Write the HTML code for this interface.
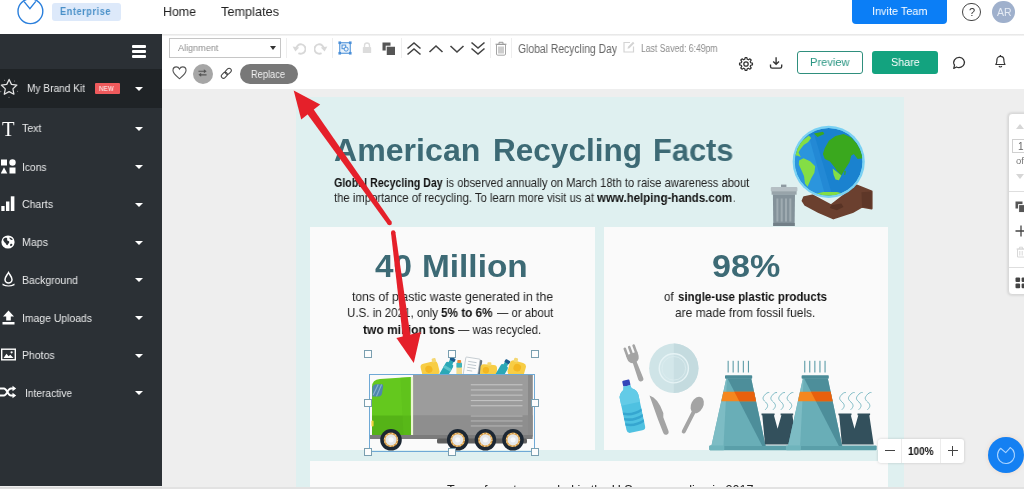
<!DOCTYPE html>
<html lang="en">
<head>
<meta charset="utf-8">
<title>Global Recycling Day - Editor</title>
<style>
*{box-sizing:border-box;margin:0;padding:0}
html,body{width:1024px;height:489px;overflow:hidden;background:#eeeeee;font-family:"Liberation Sans",sans-serif;}
#app{position:relative;width:1024px;height:489px;overflow:hidden;background:#eeeeee}
.abs{position:absolute}
.t{position:absolute;white-space:nowrap;transform-origin:0 50%;line-height:1;will-change:transform}
/* top bar */
#topbar{position:absolute;left:0;top:0;width:1024px;height:34px;background:#fff;}
#topshadow{position:absolute;left:162px;top:34px;width:862px;height:2px;background:linear-gradient(#e4e4e4,#f6f6f6)}
/* sidebar */
#sidebar{position:absolute;left:0;top:34px;width:162px;height:452px;background:#2b3035}
#brandrow{position:absolute;left:0;top:35.2px;width:162px;height:39px;background:#1f2326}
.sb{color:#e9eaeb;font-size:11px}
.caret{position:absolute;left:134.6px;width:0;height:0;margin-top:.8px;border-left:4.7px solid transparent;border-right:4.7px solid transparent;border-top:4.8px solid #fff}
/* toolbar */
#toolbar{position:absolute;left:162px;top:34px;width:862px;height:55px;background:#fff}
.sep{position:absolute;top:38px;width:1px;height:20px;background:#eeeeee}
/* page */
#page{position:absolute;left:296px;top:97px;width:608px;height:392px;background:#dff0f0}
.card{position:absolute;background:#fafafa}
.hd{color:#3d6a75;font-weight:bold}
.bd{color:#222;font-size:13px}
.bd b{color:#111}
.handle{position:absolute;width:8px;height:8px;background:#fdfdfd;border:1px solid #7a9fb0}
</style>
</head>
<body>
<div id="app">

<!-- ===== CANVAS PAGE ===== -->
<div id="page"></div>
<div class="card" style="left:310px;top:227px;width:285px;height:223px"></div>
<div class="card" style="left:604px;top:227px;width:284px;height:223px"></div>
<div class="card" style="left:310px;top:461px;width:578px;height:30px"></div>

<!--ILLUS-START-->
<svg class="abs" style="left:0;top:0" width="1024" height="489" viewBox="0 0 1024 489">
<!-- globe -->
<path d="M804.1 197.2 L812.5 195.4 L831.1 205.3 L856.6 185.5 L871.6 191.4 L871.6 208.5 L862.0 206.7 L852.5 212.1 L833.4 218.4 L818.8 212.1 L805.3 204.9 L802.6 200.8 Z" fill="#6b402f" stroke="#6b402f" stroke-width="2" stroke-linejoin="round"/>
<path d="M831.1 205.3 L841.3 203.5 L843.5 206.9 L836.8 210.3 L830.0 208.0 Z" fill="#583325"/>
<path d="M861.5 192.3 L871.6 191.4 L871.6 208.5 L862.0 206.7 Z" fill="#5e3728"/>
<circle cx="828.7" cy="161.8" r="36.1" fill="#7ad1f3"/>
<clipPath id="gc"><circle cx="828.7" cy="161.8" r="33.8"/></clipPath>
<g clip-path="url(#gc)">
<circle cx="828.7" cy="161.8" r="33.8" fill="#1a82cf"/>
<path d="M788.0 141.6 L807.6 130.2 L833.0 198.9 L802.7 198.9 L788.0 174.4 Z" fill="#2b95dd"/>
<path d="M808.9 136.4 L814.2 134.3 L831.9 194.0 L824.8 194.0 Z" fill="#2389d5"/>
<path d="M794.5 149.5 L797.5 144.9 L803.1 140.0 L808.9 135.7 L811.2 138.0 L808.0 142.3 L803.7 144.9 L800.4 149.2 L798.5 152.4 L800.8 157.0 L797.8 155.7 L795.2 155.4 Z" fill="#84de45"/>
<path d="M813.9 133.5 L823.0 131.8 L824.3 134.1 L817.5 137.1 Z" fill="#3aa81e"/>
<path d="M799.1 160.6 L803.5 158.3 L810.1 161.3 L815.2 166.2 L814.4 172.7 L811.1 178.6 L807.6 186.8 L805.0 183.5 L804.0 176.0 L801.1 169.5 L798.8 164.6 Z" fill="#84de45"/>
<path d="M822.9 154.1 L824.7 148.2 L828.9 140.8 L835.5 135.9 L843.6 134.1 L851.2 137.4 L857.1 143.9 L861.3 152.1 L863.6 158.3 L857.7 159.0 L853.8 154.1 L851.2 155.7 L849.5 162.3 L845.3 168.8 L841.4 175.4 L837.1 171.1 L833.8 166.2 L829.7 161.3 L824.8 159.0 Z" fill="#3aa81e"/>
<path d="M832.7 168.5 L841.4 175.4 L838.9 180.3 L835.5 179.6 L833.5 174.4 Z" fill="#84de45"/>
<path d="M844.3 171.1 L845.8 170.8 L845.4 174.7 L844.3 174.9 Z" fill="#3aa81e"/>
<path d="M814.2 194.3 L823.2 192.0 L837.1 192.0 L845.3 194.3 L837.1 198.9 L820.7 198.9 Z" fill="#84de45"/>
</g>
<rect x="781" y="184.6" width="5.4" height="3" fill="#8e9aa1"/>
<rect x="770.8" y="187" width="26.6" height="4.4" rx="1" fill="#b5bfc4"/>
<rect x="771.6" y="191.2" width="25" height="3.5" fill="#98a4aa"/>
<path d="M772.9 194.6 H795 L794.6 226 H773.3 Z" fill="#84929a"/>
<rect x="776.4" y="198.5" width="2" height="23" fill="#9fabb1"/>
<rect x="780.7" y="198.5" width="2" height="23" fill="#9fabb1"/>
<rect x="785.0" y="198.5" width="2" height="23" fill="#9fabb1"/>
<rect x="789.3" y="198.5" width="2" height="23" fill="#9fabb1"/>
<rect x="773.2" y="222.9" width="21.5" height="3.1" fill="#727f87"/>
<!-- truck -->
<g transform="rotate(-14 430 368)"><rect x="421" y="362.2" width="17.5" height="14" rx="3.5" fill="#f7cd45"/><rect x="433.6" y="359.4" width="4" height="4" rx="1" fill="#f4d773"/><circle cx="428.6" cy="369" r="3.6" fill="#f3b722"/></g>
<g transform="rotate(30 448 367)"><rect x="444" y="362.5" width="8.4" height="17" rx="2.2" fill="#2ba8b6"/><rect x="446" y="358.8" width="4.4" height="5" fill="#2ba8b6"/><rect x="445.4" y="356.4" width="5.6" height="3.4" rx="1" fill="#1c5e90"/><rect x="444" y="367" width="8.4" height="3" fill="#5cc4cc"/></g>
<rect x="456.4" y="362.6" width="5.6" height="5.4" rx="1" fill="#3fb3b8"/><rect x="456.4" y="367.6" width="5.6" height="7" fill="#f1dc8c"/><rect x="457.3" y="360" width="3.8" height="3" rx=".8" fill="#ea8b3a"/>
<g transform="rotate(9 472 366)"><rect x="465.8" y="358.6" width="15.6" height="19" rx="1.2" fill="#62727d"/><rect x="464.6" y="358" width="14.4" height="19" rx=".8" fill="#fcfcfc" stroke="#a9b4bb" stroke-width=".6"/><path d="M467.5 362 H476 M467.5 365 H476 M467.5 368 H476 M467.5 371 H473" stroke="#b4bec5" stroke-width=".8"/></g>
<g transform="rotate(4 489 369)"><rect x="480.4" y="364.6" width="16.6" height="12" rx="3.5" fill="#f7cd45"/><rect x="487" y="362.2" width="4" height="3.4" rx="1" fill="#f4d773"/><circle cx="486" cy="370.5" r="3.2" fill="#f3b722"/></g>
<g transform="rotate(30 503 368)"><rect x="499.6" y="364.6" width="8" height="14" rx="2.2" fill="#2ba8b6"/><rect x="501.5" y="361" width="4.2" height="4.6" fill="#2ba8b6"/><rect x="500.9" y="358.6" width="5.4" height="3.4" rx="1" fill="#1c5e90"/></g>
<g transform="rotate(16 517 367)"><rect x="509" y="361.4" width="16.6" height="15" rx="3.8" fill="#f7cd45"/><rect x="512" y="358.6" width="4" height="4" rx="1" fill="#f4d773"/><circle cx="517.4" cy="367.6" r="3.8" fill="#f3b722"/></g>
<rect x="413" y="374.3" width="119.6" height="62.3" fill="#9c9c9c"/>
<rect x="413" y="415.3" width="119.6" height="21.3" fill="#8e8e8e"/>
<path d="M528 374.3 H532.6 V434 Q532.6 436.6 529 436.6 H528 Z" fill="#8a8a8a"/>
<rect x="470.8" y="384.2" width="51.7" height="1.1" fill="#c2c2c2"/>
<rect x="470.8" y="389.4" width="51.7" height="1.1" fill="#c2c2c2"/>
<rect x="470.8" y="394.6" width="51.7" height="1.1" fill="#c2c2c2"/>
<rect x="470.8" y="400.0" width="51.7" height="1.1" fill="#c2c2c2"/>
<rect x="470.8" y="405.2" width="51.7" height="1.1" fill="#c2c2c2"/>
<rect x="470.8" y="415.5" width="51.7" height="1.1" fill="#b3b3b3"/>
<rect x="470.8" y="420.4" width="51.7" height="1.1" fill="#b3b3b3"/>
<rect x="470.8" y="425.4" width="51.7" height="1.1" fill="#b3b3b3"/>
<rect x="410.8" y="377" width="2.3" height="58.5" fill="#e9f6cf"/>
<path d="M372 387 Q372 379.3 380 378.9 L410.8 377 V435.3 H372 Z" fill="#64c81e"/>
<path d="M372 415.4 H410.8 V435.3 H372 Z" fill="#55b317"/>
<path d="M400.5 377.7 L410.8 377 V435.3 H403.5 Z" fill="#5cbd1a" opacity=".5"/>
<path d="M372.3 388 Q373 384.3 376.6 384.3 H381.8 Q383.5 384.3 383.2 386.2 L382 393.6 Q381.4 396.5 378.4 396.5 H372.3 Z" fill="#4f86ad"/>
<path d="M376.5 396.3 L381.6 384.5 M373.2 395 L378.2 384.5" stroke="#86b4cf" stroke-width="1.1"/>
<rect x="371.4" y="420.5" width="2.2" height="6" rx="1" fill="#f2d33c"/>
<rect x="369.6" y="435" width="163" height="4" fill="#7b7b7b"/>
<rect x="437" y="438.6" width="90" height="4.8" rx="1.5" fill="#5f5f5f"/>
<circle cx="391.0" cy="439.8" r="10.8" fill="#1c2733"/>
<circle cx="391.0" cy="439.8" r="7.3" fill="#d79b45"/>
<circle cx="391.0" cy="439.8" r="5.6" fill="#e4e7ea"/>
<circle cx="391.0" cy="439.8" r="6.4" fill="none" stroke="#f4d9a0" stroke-width="1.3" stroke-dasharray="1.2 2.15"/>
<circle cx="391.0" cy="439.8" r="2.6" fill="#f7f8f9"/>
<circle cx="457.7" cy="439.8" r="10.8" fill="#1c2733"/>
<circle cx="457.7" cy="439.8" r="7.3" fill="#d79b45"/>
<circle cx="457.7" cy="439.8" r="5.6" fill="#e4e7ea"/>
<circle cx="457.7" cy="439.8" r="6.4" fill="none" stroke="#f4d9a0" stroke-width="1.3" stroke-dasharray="1.2 2.15"/>
<circle cx="457.7" cy="439.8" r="2.6" fill="#f7f8f9"/>
<circle cx="485.4" cy="439.8" r="10.8" fill="#1c2733"/>
<circle cx="485.4" cy="439.8" r="7.3" fill="#d79b45"/>
<circle cx="485.4" cy="439.8" r="5.6" fill="#e4e7ea"/>
<circle cx="485.4" cy="439.8" r="6.4" fill="none" stroke="#f4d9a0" stroke-width="1.3" stroke-dasharray="1.2 2.15"/>
<circle cx="485.4" cy="439.8" r="2.6" fill="#f7f8f9"/>
<circle cx="513.0" cy="439.8" r="10.8" fill="#1c2733"/>
<circle cx="513.0" cy="439.8" r="7.3" fill="#d79b45"/>
<circle cx="513.0" cy="439.8" r="5.6" fill="#e4e7ea"/>
<circle cx="513.0" cy="439.8" r="6.4" fill="none" stroke="#f4d9a0" stroke-width="1.3" stroke-dasharray="1.2 2.15"/>
<circle cx="513.0" cy="439.8" r="2.6" fill="#f7f8f9"/>
<!-- factory -->
<rect x="709.3" y="445.5" width="167.4" height="4.8" rx="1" fill="#5a9fa9"/>
<rect x="727.6" y="360.8" width="1.1" height="11.7" fill="#5c9ca7"/>
<rect x="732.6" y="360.8" width="1.1" height="11.7" fill="#5c9ca7"/>
<rect x="737.7" y="360.8" width="1.1" height="11.7" fill="#5c9ca7"/>
<rect x="742.8" y="360.8" width="1.1" height="11.7" fill="#5c9ca7"/>
<rect x="747.9" y="360.8" width="1.1" height="11.7" fill="#5c9ca7"/>
<path d="M726.3 378.6 H751.2 L765.6 446.0 H711.4 Z" fill="#69aeb7"/>
<path d="M726.3 378.6 H727.0 L723.5 446.0 H711.4 Z" fill="#7dbcc4"/>
<path d="M727.6 378.6 H751.2 L765.6 446.0 H762.3 Z" fill="#4d8e9a"/>
<path d="M723.4 391.7 H754.0 L756.0 401.3 H721.3 Z" fill="#f5871f"/>
<path d="M734.3 391.7 H754.0 L756.0 401.3 H739.3 Z" fill="#e8600c"/>
<rect x="725.0" y="375.2" width="27.2" height="3.6" rx=".8" fill="#4b8b97"/>
<path d="M761.5 413.6 L774.6 413.6 L774.6 415.2 L773.9 415.2 L777.6 428.8 L781.4 415.2 L780.6 415.2 L780.6 413.6 L793.2 413.6 L793.2 415.2 L792.4 415.2 L796.8 444.6 L765.0 444.6 L762.3 415.2 L761.5 415.2 Z" fill="#33505c"/>
<path d="M765.5 409.5 C768.7 406.5 768.1 404.5 765.5 402 C762.7 399.5 762.3 398 764.3 395.5 C765.7 393.5 768.1 392 768.9 392.4" fill="none" stroke="#7dbac4" stroke-width="1" stroke-linecap="round"/>
<path d="M773.3 409.5 C776.5 406.5 775.9 404.5 773.3 402 C770.5 399.5 770.1 398 772.1 395.5 C773.5 393.5 775.9 392 776.7 392.4" fill="none" stroke="#7dbac4" stroke-width="1" stroke-linecap="round"/>
<path d="M781.2 409.5 C784.4 406.5 783.8 404.5 781.2 402 C778.4 399.5 778.0 398 780.0 395.5 C781.4 393.5 783.8 392 784.6 392.4" fill="none" stroke="#7dbac4" stroke-width="1" stroke-linecap="round"/>
<path d="M789.6 409.5 C792.8 406.5 792.2 404.5 789.6 402 C786.8 399.5 786.4 398 788.4 395.5 C789.8 393.5 792.2 392 793.0 392.4" fill="none" stroke="#7dbac4" stroke-width="1" stroke-linecap="round"/>
<rect x="804.2" y="360.8" width="1.1" height="11.7" fill="#5c9ca7"/>
<rect x="809.2" y="360.8" width="1.1" height="11.7" fill="#5c9ca7"/>
<rect x="814.3" y="360.8" width="1.1" height="11.7" fill="#5c9ca7"/>
<rect x="819.4" y="360.8" width="1.1" height="11.7" fill="#5c9ca7"/>
<rect x="824.5" y="360.8" width="1.1" height="11.7" fill="#5c9ca7"/>
<path d="M802.9 378.6 H827.8 L842.2 446.0 H788.0 Z" fill="#69aeb7"/>
<path d="M802.9 378.6 H803.6 L800.1 446.0 H788.0 Z" fill="#7dbcc4"/>
<path d="M804.2 378.6 H827.8 L842.2 446.0 H838.9 Z" fill="#4d8e9a"/>
<path d="M800.0 391.7 H830.6 L832.6 401.3 H797.9 Z" fill="#f5871f"/>
<path d="M810.9 391.7 H830.6 L832.6 401.3 H815.9 Z" fill="#e8600c"/>
<rect x="801.6" y="375.2" width="27.2" height="3.6" rx=".8" fill="#4b8b97"/>
<path d="M838.4 413.6 L851.5 413.6 L851.5 415.2 L850.8 415.2 L854.5 428.8 L858.3 415.2 L857.5 415.2 L857.5 413.6 L870.1 413.6 L870.1 415.2 L869.3 415.2 L873.7 444.6 L841.9 444.6 L839.2 415.2 L838.4 415.2 Z" fill="#33505c"/>
<path d="M842.1 409.5 C845.3 406.5 844.7 404.5 842.1 402 C839.3 399.5 838.9 398 840.9 395.5 C842.3 393.5 844.7 392 845.5 392.4" fill="none" stroke="#7dbac4" stroke-width="1" stroke-linecap="round"/>
<path d="M850.9 409.5 C854.1 406.5 853.5 404.5 850.9 402 C848.1 399.5 847.7 398 849.7 395.5 C851.1 393.5 853.5 392 854.3 392.4" fill="none" stroke="#7dbac4" stroke-width="1" stroke-linecap="round"/>
<path d="M858.9 409.5 C862.1 406.5 861.5 404.5 858.9 402 C856.1 399.5 855.7 398 857.7 395.5 C859.1 393.5 861.5 392 862.3 392.4" fill="none" stroke="#7dbac4" stroke-width="1" stroke-linecap="round"/>
<path d="M867.7 409.5 C870.9 406.5 870.3 404.5 867.7 402 C864.9 399.5 864.5 398 866.5 395.5 C867.9 393.5 870.3 392 871.1 392.4" fill="none" stroke="#7dbac4" stroke-width="1" stroke-linecap="round"/>
<rect x="709.3" y="445.5" width="15" height="4.8" rx="1" fill="#6fb4bc"/>
<rect x="785.9" y="445.5" width="15" height="4.8" rx="1" fill="#6fb4bc"/>
<!-- utensils -->
<g transform="translate(628.8,346) rotate(-20)" fill="#a4a4a4"><rect x="-6" y="0" width="2.6" height="10" rx="1.2"/><rect x="-1.3" y="0" width="2.6" height="10" rx="1.2"/><rect x="3.4" y="0" width="2.6" height="10" rx="1.2"/><path d="M-6 8 H6 V11 Q6 16 2 17.5 L2.6 35 Q2.6 37.6 0 37.6 Q-2.6 37.6 -2.6 35 L-2 17.5 Q-6 16 -6 11 Z"/></g>
<circle cx="673.8" cy="368.3" r="24.7" fill="#cfe4e7"/>
<path d="M673.8 343.6 A24.7 24.7 0 0 1 673.8 393 Z" fill="#c4dbdf"/>
<circle cx="673.8" cy="368.3" r="14.6" fill="#d3e7ea"/>
<path d="M673.8 353.7 A14.6 14.6 0 0 1 673.8 382.9 Z" fill="#c9dfe3"/>
<circle cx="673.8" cy="368.3" r="14.6" fill="none" stroke="#e6f3f5" stroke-width="1.4"/>
<circle cx="673.8" cy="368.3" r="11.8" fill="none" stroke="#dcecef" stroke-width=".8"/>
<g transform="translate(625.6,380.2) rotate(-12)"><rect x="-3.6" y="0" width="7.4" height="6" rx="1" fill="#3345b9"/><path d="M-3.4 6 H3.6 L4.2 9 Q9.5 12 9.5 17 V49 Q9.5 52.5 6 52.5 H-6 Q-9.5 52.5 -9.5 49 V17 Q-9.5 12 -4.2 9 Z" fill="#4fc1e1"/><path d="M-3.4 6 H3.6 L4.2 9 Q9.5 12 9.5 17 V24 H-9.5 V17 Q-9.5 12 -4.2 9 Z" fill="#63cbe7"/><path d="M-9.5 31 Q0 35 9.5 31 V33.6 Q0 37.6 -9.5 33.6 Z M-9.5 36.5 Q0 40.5 9.5 36.5 V39.1 Q0 43.1 -9.5 39.1 Z M-9.5 42 Q0 46 9.5 42 V44.6 Q0 48.6 -9.5 44.6 Z" fill="#36a6d0"/></g>
<g transform="translate(651,395) rotate(-19)" fill="#a4a4a4"><path d="M-1.6 0 Q5.6 5 5.8 21 L4.4 25 L4.8 39.5 Q4.8 42.6 2 42.6 Q-0.8 42.6 -0.8 39.5 L-1.4 25 Z"/></g>
<g transform="translate(697.2,405) rotate(27)" fill="#a4a4a4"><ellipse cx="0" cy="0" rx="6" ry="8.8"/><path d="M-2 6 H2 L2 29.5 Q2 31.8 0 31.8 Q-2 31.8 -2 29.5 Z"/></g>
</svg>
<!--ILLUS-END-->
<!--PAGETEXT-START-->
<span class="t hd" id="h1a" style="left:334.0px;top:135.0px;font-size:31.4px;transform:scaleX(1.0232)">American</span>
<span class="t hd" id="h1b" style="left:493.0px;top:135.0px;font-size:31.4px;transform:scaleX(1.0047)">Recycling</span>
<span class="t hd" id="h1c" style="left:652.5px;top:135.0px;font-size:31.4px;transform:scaleX(0.9815)">Facts</span>
<span class="t bd" id="p1a" style="left:333.8px;top:176.8px;font-size:12.4px;transform:scaleX(0.8579)"><b>Global Recycling Day</b></span>
<span class="t bd" id="p1b" style="left:446.2px;top:176.8px;font-size:12.4px;transform:scaleX(0.8987)">is observed annually on March 18th to raise awareness about</span>
<span class="t bd" id="p2a" style="left:334.0px;top:191.8px;font-size:12.4px;transform:scaleX(0.9104)">the importance of recycling. To learn more visit us at</span>
<span class="t bd" id="p2b" style="left:597.0px;top:191.8px;font-size:12.4px;transform:scaleX(0.9279)"><b>www.helping-hands.com</b></span>
<span class="t bd" id="p2c" style="left:732.6px;top:191.8px;font-size:12.4px;transform:scaleX(0.6950)">.</span>
<span class="t hd" id="h2a" style="left:374.6px;top:251.4px;font-size:31.4px;transform:scaleX(1.0595)">40</span>
<span class="t hd" id="h2b" style="left:422.3px;top:251.4px;font-size:31.4px;transform:scaleX(1.0635)">Million</span>
<span class="t bd" id="c1" style="left:351.5px;top:289.9px;font-size:13.0px;transform:scaleX(0.9364)">tons of plastic waste generated in the</span>
<span class="t bd" id="c2a" style="left:346.7px;top:306.3px;font-size:13.0px;transform:scaleX(0.8877)">U.S. in 2021, only</span>
<span class="t bd" id="c2b" style="left:441.2px;top:306.3px;font-size:13.0px;transform:scaleX(0.9023)"><b>5% to 6%</b></span>
<span class="t bd" id="c2c" style="left:497.4px;top:306.3px;font-size:13.0px;transform:scaleX(0.8752)">— or about</span>
<span class="t bd" id="c3a" style="left:362.5px;top:322.7px;font-size:13.0px;transform:scaleX(0.9248)"><b>two million tons</b></span>
<span class="t bd" id="c3b" style="left:457.6px;top:322.7px;font-size:13.0px;transform:scaleX(0.8723)">— was recycled.</span>
<span class="t hd" id="h3" style="left:711.6px;top:251.3px;font-size:31.4px;transform:scaleX(1.0855)">98%</span>
<span class="t bd" id="d1a" style="left:664.0px;top:289.9px;font-size:13.0px;transform:scaleX(0.8853)">of</span>
<span class="t bd" id="d1b" style="left:677.7px;top:289.9px;font-size:13.0px;transform:scaleX(0.8852)"><b>single-use plastic products</b></span>
<span class="t bd" id="d2" style="left:674.6px;top:306.3px;font-size:13.0px;transform:scaleX(0.9209)">are made from fossil fuels.</span>
<span class="t bd" id="e1" style="left:447.0px;top:483.9px;font-size:12.4px;transform:scaleX(1.0137)">Tons of waste recycled in the U.S. vs. recycling in 2017</span>
<!--PAGETEXT-END-->

<!-- ===== TOP BAR ===== -->
<div id="topbar"></div>
<!--TOPBAR-START-->
<!-- logo -->
<svg class="abs" style="left:16px;top:0" width="30" height="26" viewBox="16 0 30 26"><circle cx="30.4" cy="11.2" r="12.4" fill="none" stroke="#2a7fdc" stroke-width="1.4"/><path d="M24.1 1.6 L29.9 8.6 L35.8 1.4" fill="none" stroke="#2a7fdc" stroke-width="1.4" stroke-linejoin="miter"/></svg>
<div class="abs" style="left:51.5px;top:3px;width:69.5px;height:17.5px;background:#dde9fa;border-radius:3px"></div>
<span class="t" id="tb0" style="left:60px;top:7px;font-size:10px;font-weight:bold;color:#4a90c8;letter-spacing:.6px;transform:scaleX(0.9194)">Enterprise</span>
<span class="t" id="tb1" style="left:163px;top:4.5px;font-size:13px;color:#222;transform:scaleX(0.9514)">Home</span>
<span class="t" id="tb2" style="left:221px;top:4.5px;font-size:13px;color:#222;transform:scaleX(0.9789)">Templates</span>
<div class="abs" style="left:852px;top:-4px;width:95px;height:28px;background:#0b7ef6;border-radius:4px"></div>
<span class="t" id="tb3" style="left:872px;top:6px;font-size:11.5px;color:#fff;transform:scaleX(0.9469)">Invite Team</span>
<div class="abs" style="left:962px;top:2.5px;width:18.5px;height:18.5px;border:1px solid #444;border-radius:50%"></div>
<span class="t" id="tb4" style="left:968.5px;top:6.5px;font-size:11px;color:#333">?</span>
<div class="abs" style="left:992px;top:0.5px;width:22.5px;height:22.5px;background:#9fb0cc;border-radius:50%"></div>
<span class="t" id="tb5" style="left:996.5px;top:6.5px;font-size:10.5px;color:#e6ecf5">AR</span>
<!--TOPBAR-END-->

<!-- ===== TOOLBAR ===== -->
<div id="toolbar"></div>
<div id="topshadow"></div>
<!--TOOLBAR-START-->
<!-- alignment select -->
<div class="abs" style="left:169px;top:38px;width:111.5px;height:19.6px;border:1px solid #c6c6c6;background:#fff"></div>
<span class="t" id="tl0" style="left:177.6px;top:43.1px;font-size:9.5px;color:#8e8e8e;transform:scaleX(0.9586)">Alignment</span>
<div class="abs" style="left:269.5px;top:45.5px;width:0;height:0;border-left:3.5px solid transparent;border-right:3.5px solid transparent;border-top:4.5px solid #333"></div>
<div class="sep" style="left:286px"></div>
<div class="sep" style="left:332px"></div>
<div class="sep" style="left:401px"></div>
<div class="sep" style="left:490px"></div>
<div class="sep" style="left:511px"></div>
<!-- undo / redo -->
<svg class="abs" style="left:292px;top:42px" width="14" height="14" viewBox="0 0 14 14"><path d="M4.1 7 A4.7 4.7 0 1 1 6.45 11.1" fill="none" stroke="#d8d8d8" stroke-width="1.9"/><path d="M0.6 4.6 L7.2 5.4 L3.4 9.6 Z" fill="#d8d8d8"/></svg>
<svg class="abs" style="left:313.5px;top:42px" width="14" height="14" viewBox="0 0 14 14"><g transform="translate(14,0) scale(-1,1)"><path d="M4.1 7 A4.7 4.7 0 1 1 6.45 11.1" fill="none" stroke="#d8d8d8" stroke-width="1.9"/><path d="M0.6 4.6 L7.2 5.4 L3.4 9.6 Z" fill="#d8d8d8"/></g></svg>
<!-- group -->
<svg class="abs" style="left:338.4px;top:41px" width="14" height="14" viewBox="0 0 16 16"><rect x="2" y="2" width="12" height="12" fill="#eaf3fb" stroke="#4a8fd8" stroke-width="1.2"/><rect x="0.5" y="0.5" width="3" height="3" fill="#4a8fd8"/><rect x="12.5" y="0.5" width="3" height="3" fill="#4a8fd8"/><rect x="0.5" y="12.5" width="3" height="3" fill="#4a8fd8"/><rect x="12.5" y="12.5" width="3" height="3" fill="#4a8fd8"/><rect x="4.6" y="4.6" width="4.2" height="4.2" fill="none" stroke="#4a8fd8" stroke-width="1.1"/><circle cx="9.3" cy="9.3" r="2.3" fill="#eaf3fb" stroke="#4a8fd8" stroke-width="1.1"/></svg>
<!-- lock -->
<svg class="abs" style="left:362.4px;top:41.6px" width="10" height="11.7" viewBox="0 0 12 14"><path d="M3 6.5 V4.2 A3 3 0 0 1 9 4.2 V6.5" fill="none" stroke="#dcdcdc" stroke-width="1.6"/><rect x="1" y="6" width="10" height="7.5" rx="1" fill="#dcdcdc"/></svg>
<!-- copy -->
<svg class="abs" style="left:382px;top:41.5px" width="14" height="14" viewBox="0 0 14 14"><rect x="0.5" y="0.5" width="8" height="8" fill="#555"/><rect x="4.2" y="4.2" width="9.3" height="9.3" fill="#555" stroke="#fff" stroke-width="1"/></svg>
<!-- chevrons -->
<svg class="abs" style="left:406px;top:41px" width="16" height="16" viewBox="0 0 16 16"><path d="M1.5 7.5 L8 2 L14.5 7.5 M1.5 13.5 L8 8 L14.5 13.5" fill="none" stroke="#444" stroke-width="1.6"/></svg>
<svg class="abs" style="left:428px;top:41px" width="16" height="16" viewBox="0 0 16 16"><path d="M1.5 11 L8 5 L14.5 11" fill="none" stroke="#444" stroke-width="1.6"/></svg>
<svg class="abs" style="left:449px;top:41px" width="16" height="16" viewBox="0 0 16 16"><path d="M1.5 5 L8 11 L14.5 5" fill="none" stroke="#444" stroke-width="1.6"/></svg>
<svg class="abs" style="left:470px;top:40px" width="16" height="16" viewBox="0 0 16 16"><path d="M1.5 2.5 L8 8 L14.5 2.5 M1.5 8.5 L8 14 L14.5 8.5" fill="none" stroke="#444" stroke-width="1.6"/></svg>
<!-- trash -->
<svg class="abs" style="left:495px;top:41px" width="12" height="15" viewBox="0 0 12 15"><path d="M1.5 3.5 H10.5 V13 A1.2 1.2 0 0 1 9.3 14.2 H2.7 A1.2 1.2 0 0 1 1.5 13 Z" fill="#fff" stroke="#a5a5a5" stroke-width="1"/><path d="M0.5 3.2 H11.5 M4 3 V1.3 H8 V3 M4 5.5 V12.5 M6 5.5 V12.5 M8 5.5 V12.5" fill="none" stroke="#9a9a9a" stroke-width="1"/></svg>
<!-- title -->
<span class="t" id="tl1" style="left:518px;top:42.5px;font-size:12px;color:#666;transform:scaleX(0.8630)">Global Recycling Day</span>
<svg class="abs" style="left:623px;top:41px" width="12" height="12" viewBox="0 0 12 12"><path d="M7 1.5 H1 V11 H10.5 V5.5" fill="none" stroke="#d4d4d4" stroke-width="1.2"/><path d="M4.5 7.8 L5 5.8 L10 0.8 L11.4 2.2 L6.4 7.2 Z" fill="#d4d4d4"/></svg>
<span class="t" id="tl2" style="left:641px;top:43.5px;font-size:10px;color:#8c8c8c;transform:scaleX(0.8600)">Last Saved: 6:49pm</span>
<!-- second row -->
<svg class="abs" style="left:171.8px;top:66.4px" width="15" height="14" viewBox="0 0 16 15"><path d="M8 13.6 C4.5 10.6 1 8 1 4.8 C1 2.6 2.7 1 4.6 1 C6 1 7.3 1.8 8 3.2 C8.7 1.8 10 1 11.4 1 C13.3 1 15 2.6 15 4.8 C15 8 11.5 10.6 8 13.6 Z" fill="none" stroke="#555" stroke-width="1.2"/></svg>
<div class="abs" style="left:192.5px;top:63.5px;width:20px;height:20px;background:#a6a6a6;border-radius:50%"></div>
<svg class="abs" style="left:198px;top:69.4px" width="9" height="8.1" viewBox="0 0 10 9"><path d="M0.5 2.5 H7 M3 6.5 H9.5" stroke="#555" stroke-width="1.2" fill="none"/><path d="M6.5 0.3 L9.6 2.5 L6.5 4.7 Z M3.5 4.3 L0.4 6.5 L3.5 8.7 Z" fill="#555"/></svg>
<svg class="abs" style="left:220px;top:67.2px" width="12.6" height="12.6" viewBox="0 0 14 14"><g transform="rotate(-45 7 7)" fill="none" stroke="#444" stroke-width="1.15"><rect x="0.2" y="4.6" width="7.4" height="4.8" rx="2.4"/><rect x="6.4" y="4.6" width="7.4" height="4.8" rx="2.4"/></g></svg>
<div class="abs" style="left:240px;top:64px;width:57.5px;height:20px;background:#787878;border-radius:10px"></div>
<span class="t" id="tl3" style="left:251px;top:69px;font-size:10.5px;color:#f1f1f1;transform:scaleX(0.8824)">Replace</span>
<!-- right icons -->
<svg class="abs" style="left:738.2px;top:55.5px" width="16" height="16" viewBox="0 0 16 16"><path d="M14.44 7.13 L14.44 8.87 L12.74 9.26 L12.24 10.46 L13.17 11.94 L11.94 13.17 L10.46 12.24 L9.26 12.74 L8.87 14.44 L7.13 14.44 L6.74 12.74 L5.54 12.24 L4.06 13.17 L2.83 11.94 L3.76 10.46 L3.26 9.26 L1.56 8.87 L1.56 7.13 L3.26 6.74 L3.76 5.54 L2.83 4.06 L4.06 2.83 L5.54 3.76 L6.74 3.26 L7.13 1.56 L8.87 1.56 L9.26 3.26 L10.46 3.76 L11.94 2.83 L13.17 4.06 L12.24 5.54 L12.74 6.74 Z" fill="none" stroke="#333" stroke-width="1.25" stroke-linejoin="round"/><circle cx="8" cy="8" r="2.2" fill="none" stroke="#333" stroke-width="1.25"/></svg>
<svg class="abs" style="left:769px;top:55px" width="15" height="15" viewBox="0 0 15 15"><path d="M7.1 2.2 V9.2 M4.2 6.4 L7.1 9.3 L10 6.4" fill="none" stroke="#333" stroke-width="1.35"/><path d="M1.5 9.4 V11.5 A1.6 1.6 0 0 0 3.1 13.1 H11.1 A1.6 1.6 0 0 0 12.7 11.5 V9.4" fill="none" stroke="#333" stroke-width="1.35"/></svg>
<div class="abs" style="left:797px;top:51px;width:66px;height:23px;border:1.5px solid #2f8f7d;border-radius:3px;background:#fff"></div>
<span class="t" id="tl4" style="left:810px;top:57px;font-size:11.5px;color:#2a9683;transform:scaleX(0.9656)">Preview</span>
<div class="abs" style="left:872px;top:51px;width:66px;height:23px;border-radius:3px;background:#13a37f"></div>
<span class="t" id="tl5" style="left:890.5px;top:57px;font-size:11.5px;color:#fff;transform:scaleX(0.9369)">Share</span>
<svg class="abs" style="left:951.8px;top:55.6px" width="14.6" height="14.6" viewBox="0 0 15 15"><path d="M7.8 1.5 A5.6 5.2 0 1 1 4.6 11.3 L1.8 12.8 L2.6 9.4 A5.6 5.2 0 0 1 7.8 1.5 Z" fill="none" stroke="#333" stroke-width="1.3" stroke-linejoin="round"/></svg>
<svg class="abs" style="left:993.7px;top:54.2px" width="12.8" height="14.6" viewBox="0 0 14 16"><path d="M2 11.5 C3.2 10 3 8.5 3.2 6.5 A3.8 3.8 0 0 1 10.8 6.5 C11 8.5 10.8 10 12 11.5 Z" fill="none" stroke="#333" stroke-width="1.3" stroke-linejoin="round"/><path d="M5.5 13.2 A1.6 1.6 0 0 0 8.5 13.2 M7 2.7 V1.2" fill="none" stroke="#333" stroke-width="1.3"/></svg>
<!--TOOLBAR-END-->

<!-- ===== SIDEBAR ===== -->
<div id="sidebar"><div id="brandrow"></div></div>
<!--SIDEBAR-START-->
<!-- hamburger -->
<div class="abs" style="left:132px;top:45px;width:14px;height:2.5px;background:#fff;border-radius:1px"></div>
<div class="abs" style="left:132px;top:50px;width:14px;height:2.5px;background:#fff;border-radius:1px"></div>
<div class="abs" style="left:132px;top:55px;width:14px;height:2.5px;background:#fff;border-radius:1px"></div>

<!-- My Brand Kit -->
<svg class="abs" style="left:0;top:78px" width="19" height="20" viewBox="0 0 19 20"><path d="M9.10 1.40 L11.45 6.36 L16.90 7.07 L12.90 10.84 L13.92 16.23 L9.10 13.60 L4.28 16.23 L5.30 10.84 L1.30 7.07 L6.75 6.36 Z" fill="none" stroke="#e4e4e4" stroke-width="1.25" stroke-linejoin="round"/><circle cx="4.6" cy="2.2" r=".55" fill="#999"/><circle cx="14.6" cy="3" r=".55" fill="#999"/><circle cx="17.6" cy="13.2" r=".55" fill="#999"/><circle cx="9" cy="19.2" r=".55" fill="#999"/><circle cx=".8" cy="13.6" r=".55" fill="#999"/></svg>
<span class="t sb" id="sb0" style="left:26.5px;top:83px;font-size:10.6px;transform:scaleX(0.9565)">My Brand Kit</span>
<div class="abs" style="left:94.5px;top:83px;width:25.5px;height:11px;background:#ef5a5c;border-radius:1px"></div>
<span class="t" id="sbnew" style="left:99px;top:85px;font-size:7px;color:#fff;letter-spacing:.2px;transform:scaleX(0.8856)">NEW</span>
<div class="caret" style="top:86px"></div>

<!-- Text -->
<span class="t" style="left:2px;top:118.5px;font-family:'Liberation Serif',serif;font-size:20.5px;color:#fff">T</span>
<span class="t sb" id="sb1" style="left:22px;top:122.7px;transform:scaleX(0.9659)">Text</span>
<div class="caret" style="top:126px"></div>

<!-- Icons -->
<svg class="abs" style="left:1px;top:159px" width="15" height="15" viewBox="0 0 15 15"><rect x="0" y="0.5" width="6" height="6" fill="#fff"/><circle cx="11.5" cy="3.5" r="3.2" fill="#fff"/><path d="M3 8.3 L6.3 14.5 L-0.3 14.5 Z" fill="#fff"/><rect x="8.5" y="8.5" width="6" height="6" fill="#fff"/></svg>
<span class="t sb" id="sb2" style="left:22px;top:161.7px;transform:scaleX(0.9317)">Icons</span>
<div class="caret" style="top:164px"></div>

<!-- Charts -->
<svg class="abs" style="left:1px;top:196px" width="14" height="15" viewBox="0 0 14 15"><rect x="0.3" y="10" width="3.3" height="5" fill="#fff"/><rect x="5" y="5.5" width="3.4" height="9.5" fill="#fff"/><rect x="9.8" y="0.3" width="3.6" height="14.7" fill="#fff"/></svg>
<span class="t sb" id="sb3" style="left:22px;top:198.7px;transform:scaleX(0.9566)">Charts</span>
<div class="caret" style="top:202px"></div>

<!-- Maps -->
<svg class="abs" style="left:1px;top:235px" width="14" height="14" viewBox="0 0 14 14"><circle cx="7" cy="7" r="6.6" fill="#fff"/><path d="M2.3 4.2 C3.5 2.8 5 2.5 6 3 C6.6 4 5.8 4.8 6.3 5.6 C7 6.3 8 6 8.3 7 C8.3 8.3 7 8.6 6.8 9.8 C6.3 10.6 5.3 10 5 9 C4.7 8 3.5 7.6 3 6.6 C2.6 5.8 2 5.2 2.3 4.2 Z M8.5 2.4 C9.8 2.4 11.2 3.4 11.8 4.6 C11 5.2 10 5 9.3 4.3 C8.8 3.7 8.3 3 8.5 2.4 Z M9.5 9 C10.3 8.6 11.3 9 11.4 9.8 C11 10.8 10 11.4 9.4 11 C9 10.3 9 9.5 9.5 9 Z" fill="#2b3035"/></svg>
<span class="t sb" id="sb4" style="left:22px;top:236.7px;transform:scaleX(0.9663)">Maps</span>
<div class="caret" style="top:240px"></div>

<!-- Background -->
<svg class="abs" style="left:2px;top:271px" width="14" height="16" viewBox="0 0 14 16"><path d="M6.5 1.5 C8 4.2 10 6 10 8.6 A3.5 3.5 0 0 1 3 8.6 C3 6 5 4.2 6.5 1.5 Z" fill="none" stroke="#fff" stroke-width="1.5"/><path d="M0.5 12.5 Q6.5 16.5 12.5 12.5 L12.5 14.2 Q6.5 16.8 0.5 14.2 Z" fill="#fff"/></svg>
<span class="t sb" id="sb5" style="left:22px;top:274.7px;transform:scaleX(0.9537)">Background</span>
<div class="caret" style="top:277px"></div>

<!-- Image Uploads -->
<svg class="abs" style="left:2px;top:310px" width="13" height="15" viewBox="0 0 13 15"><path d="M6.5 0.5 L12 6.5 L8.8 6.5 L8.8 10.5 L4.2 10.5 L4.2 6.5 L1 6.5 Z" fill="#fff"/><rect x="0.5" y="12" width="12" height="2.5" fill="#fff"/></svg>
<span class="t sb" id="sb6" style="left:22px;top:312.7px;transform:scaleX(0.9459)">Image Uploads</span>
<div class="caret" style="top:315px"></div>

<!-- Photos -->
<svg class="abs" style="left:1px;top:348px" width="15" height="13" viewBox="0 0 15 13"><rect x="0.7" y="1.2" width="13.6" height="10.6" fill="none" stroke="#fff" stroke-width="1.4"/><path d="M2.5 10 L5.5 5.8 L7.6 8.3 L9.3 6.8 L12.5 10 Z" fill="#fff"/><circle cx="10.6" cy="4.3" r="1.1" fill="#fff"/></svg>
<span class="t sb" id="sb7" style="left:22px;top:349.7px;transform:scaleX(0.9518)">Photos</span>
<div class="caret" style="top:353px"></div>

<!-- Interactive -->
<svg class="abs" style="left:0px;top:385px" width="17" height="14" viewBox="0 0 17 14"><path d="M0 3.5 H4 C7 3.5 7.5 10.5 11 10.5 H13.5 M0 10.5 H4 C7 10.5 7.5 3.5 11 3.5 H13.5" fill="none" stroke="#fff" stroke-width="1.8"/><path d="M12.5 0.8 L16.2 3.5 L12.5 6.2 Z M12.5 7.8 L16.2 10.5 L12.5 13.2 Z" fill="#fff"/></svg>
<span class="t sb" id="sb8" style="left:25px;top:387.7px;transform:scaleX(0.9261)">Interactive</span>
<div class="caret" style="top:390px"></div>
<!--SIDEBAR-END-->

<!--OVERLAYS-START-->
<!-- selection -->
<div class="abs" style="left:369px;top:373.6px;width:166px;height:78px;border:1px solid #6fa9d6"></div>
<div class="handle" style="left:364px;top:350px"></div>
<div class="handle" style="left:447.5px;top:350px"></div>
<div class="handle" style="left:531px;top:350px"></div>
<div class="handle" style="left:364px;top:399.3px"></div>
<div class="handle" style="left:531px;top:399.3px"></div>
<div class="handle" style="left:364px;top:447.6px"></div>
<div class="handle" style="left:447.5px;top:447.6px"></div>
<div class="handle" style="left:531px;top:447.6px"></div>
<!-- red arrows -->
<svg class="abs" style="left:0;top:0" width="1024" height="489" viewBox="0 0 1024 489">
<path d="M391.5 221.7 L313.2 108.7 L306.8 113.3 L387.7 224.3 Z" fill="#e5202a"/><circle cx="389.6" cy="223.0" r="2.3" fill="#e5202a"/>
<path d="M293.7 90.6 L320.2 104.4 L301.2 119.4 Z" fill="#e5202a"/>
<path d="M391.0 232.8 L402.9 337.5 L410.5 336.5 L395.4 232.2 Z" fill="#e5202a"/><circle cx="393.2" cy="232.5" r="2.2" fill="#e5202a"/>
<path d="M396.4 337.9 L420.9 332 L413.8 362.9 Z" fill="#e5202a"/>
</svg>
<!-- right panel -->
<div class="abs" style="left:1008px;top:113px;width:24px;height:182px;background:#fff;border:1px solid #d9d9d9;border-radius:4px;box-shadow:0 0 3px rgba(0,0,0,.18)"></div>
<div class="abs" style="left:1016px;top:124px;width:0;height:0;border-left:4px solid transparent;border-right:4px solid transparent;border-bottom:5px solid #d6d6d6"></div>
<div class="abs" style="left:1012px;top:139px;width:16px;height:14px;border:1px solid #d0d0d0;background:#fff"></div>
<span class="t" style="left:1018px;top:141.5px;font-size:10px;color:#666">1</span>
<span class="t" style="left:1016px;top:156px;font-size:9.5px;color:#777">of</span>
<div class="abs" style="left:1016px;top:174px;width:0;height:0;border-left:4px solid transparent;border-right:4px solid transparent;border-top:5px solid #d6d6d6"></div>
<div class="abs" style="left:1009px;top:190.5px;width:15px;height:1px;background:#dedede"></div>
<svg class="abs" style="left:1015px;top:201px" width="12" height="12" viewBox="0 0 12 12"><rect x="0.5" y="0.5" width="7" height="7" fill="#555"/><rect x="3.6" y="3.6" width="8" height="8" fill="#555" stroke="#fff" stroke-width="1"/></svg>
<svg class="abs" style="left:1015px;top:225px" width="12" height="12" viewBox="0 0 12 12"><path d="M6 0.5 V11.5 M0.5 6 H11.5" stroke="#444" stroke-width="1.3"/></svg>
<svg class="abs" style="left:1016px;top:246px" width="10" height="12" viewBox="0 0 10 12"><path d="M1.5 3 H8.5 V11 H1.5 Z M0.5 3 H9.5 M3.5 3 V1.2 H6.5 V3 M3.8 5 V9.5 M6.2 5 V9.5" fill="none" stroke="#d8d8d8" stroke-width="1"/></svg>
<div class="abs" style="left:1009px;top:266.5px;width:15px;height:1px;background:#dedede"></div>
<svg class="abs" style="left:1015px;top:277px" width="12" height="12" viewBox="0 0 12 12"><rect x="0.5" y="0.5" width="4.6" height="4.6" rx="1" fill="#444"/><rect x="6.6" y="0.5" width="4.6" height="4.6" rx="1" fill="#444"/><rect x="0.5" y="6.6" width="4.6" height="4.6" rx="1" fill="#444"/><rect x="6.6" y="6.6" width="4.6" height="4.6" rx="1" fill="#444"/></svg>
<!-- zoom control -->
<div class="abs" style="left:877.5px;top:439px;width:86.5px;height:23.5px;background:#fff;border-radius:3px;box-shadow:0 0 3px rgba(0,0,0,.18)"></div>
<div class="abs" style="left:901px;top:439px;width:1px;height:23.5px;background:#ececec"></div>
<div class="abs" style="left:940px;top:439px;width:1px;height:23.5px;background:#ececec"></div>
<div class="abs" style="left:885px;top:450.3px;width:9.5px;height:1.2px;background:#444"></div>
<span class="t" id="zm" style="left:908px;top:445.5px;font-size:10.5px;color:#111;font-weight:bold;transform:scaleX(0.9494)">100%</span>
<div class="abs" style="left:947.7px;top:450.3px;width:10px;height:1.2px;background:#444"></div>
<div class="abs" style="left:952.1px;top:445.9px;width:1.2px;height:10px;background:#444"></div>
<!-- help bubble -->
<div class="abs" style="left:987.6px;top:436.5px;width:36px;height:36px;border-radius:50%;background:#1480f2;box-shadow:0 0 4px rgba(240,170,120,.35)"></div>
<svg class="abs" style="left:995.6px;top:444.9px" width="20" height="20" viewBox="0 0 20 20"><path d="M14.2 2.6 A8.5 8.5 0 1 1 4.8 3.3" fill="none" stroke="#a9d3ff" stroke-width="1.1" stroke-linecap="round"/><path d="M4.9 3.5 L9.7 7.6 L14.1 2.9" fill="none" stroke="#a9d3ff" stroke-width="1.1" stroke-linejoin="round" stroke-linecap="round"/></svg>
<!--OVERLAYS-END-->

<div class="abs" style="left:0;top:486.6px;width:162px;height:3px;background:linear-gradient(#d6d6d6,#e6e6e6)"></div>
<div class="abs" style="left:162px;top:487.4px;width:862px;height:2px;background:#e2e2e2"></div>
</div>
</body>
</html>
